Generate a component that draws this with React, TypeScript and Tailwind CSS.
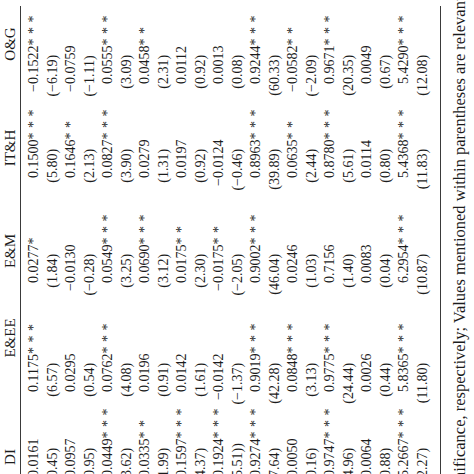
import clsx from 'clsx';

const columns = [
  {
    name: 'DI',
    w: 'w-[85px]',
    vals: ['0.0161', '(0.45)', '0.0957', '(0.95)', '0.0449***', '(3.62)', '0.0335**', '(1.99)', '0.1597***', '(4.37)', '0.1924***', '(5.51))', '0.9274***', '(47.64)', '0.0050', '(0.16)', '0.9747***', '(44.96)', '0.0064', '(0.88)', '5.2667***', '(2.27)'],
  },
  {
    name: 'E&EE',
    w: 'w-[109px]',
    vals: ['0.1175***', '(6.57)', '0.0295', '(0.54)', '0.0762***', '(4.08)', '0.0196', '(0.91)', '0.0142', '(1.61)', '−0.0142', '(−1.37)', '0.9019***', '(42.28)', '0.0848***', '(3.13)', '0.9775***', '(24.44)', '0.0026', '(0.44)', '5.8365***', '(11.80)'],
  },
  {
    name: 'E&M',
    w: 'w-[105px]',
    vals: ['0.0277*', '(1.84)', '−0.0130', '(−0.28)', '0.0549***', '(3.25)', '0.0690***', '(3.12)', '0.0175**', '(2.30)', '−0.0175**', '(−2.05)', '0.9002***', '(46.04)', '0.0246', '(1.03)', '0.7156', '(1.40)', '0.0083', '(0.04)', '6.2954***', '(10.87)'],
  },
  {
    name: 'IT&H',
    w: 'w-[94px]',
    vals: ['0.1500***', '(5.80)', '0.1646**', '(2.13)', '0.0827***', '(3.90)', '0.0279', '(1.31)', '0.0197', '(0.92)', '−0.0124', '(−0.46)', '0.8963***', '(39.89)', '0.0635**', '(2.44)', '0.8780***', '(5.61)', '0.0114', '(0.80)', '5.4368***', '(11.83)'],
  },
  {
    name: 'O&G',
    w: 'w-[121px]',
    vals: ['−0.1522***', '(−6.19)', '−0.0759', '(−1.11)', '0.0555***', '(3.09)', '0.0458**', '(2.31)', '0.0112', '(0.92)', '0.0013', '(0.08)', '0.9244***', '(60.33)', '−0.0582**', '(−2.09)', '0.9671***', '(20.35)', '0.0049', '(0.67)', '5.4290***', '(12.08)'],
  },
];

// splits "0.0549***" so the decimal points line up down a column
const Cell = ({ v, w }: { v: string; w: string }) => {
  const m = v.match(/^(.*?)(\**)$/);
  const body = m ? m[1] : v;
  const stars = m ? m[2] : '';
  const dot = body.indexOf('.');
  return (
    <div className={clsx('flex shrink-0', w)}>
      <span className="w-[50px] shrink-0 text-right whitespace-nowrap">{body.slice(0, dot)}</span>
      <span className="whitespace-nowrap">
        {body.slice(dot)}
        <span className="tracking-[4.5px]">{stars}</span>
      </span>
    </div>
  );
};

const App = () => {
  const rows = columns[0].vals.map((_, i) => i);

  return (
    <div className="w-[474px] h-[474px] overflow-hidden bg-white">
      <div className="w-[474px] h-[474px] -rotate-90 text-[#1c1c1c] font-['Liberation_Serif',serif]">
        {/* header */}
        <div className="flex h-[20px] mt-[6px] text-[15px] leading-[20px]">
          <div className="w-0 shrink-0 ml-[23px] flex justify-center"><span className="whitespace-nowrap">DI</span></div>
          <div className="w-0 shrink-0 ml-[119px] flex justify-center"><span className="whitespace-nowrap">E&amp;EE</span></div>
          <div className="w-0 shrink-0 ml-[87px] flex justify-center"><span className="whitespace-nowrap">E&amp;M</span></div>
          <div className="w-0 shrink-0 ml-[103px] flex justify-center"><span className="whitespace-nowrap">IT&amp;H</span></div>
          <div className="w-0 shrink-0 ml-[104px] flex justify-center"><span className="whitespace-nowrap">O&amp;G</span></div>
        </div>
        <div className="h-px bg-[#3a3a3a]" />

        {/* body */}
        <div className="mt-[4px] flex flex-col text-[14px] leading-[18.5px]">
          {rows.map((i) => (
            <div key={i} className="flex ml-[-40px]">
              {columns.map((c) => (
                <Cell key={c.name} v={c.vals[i]} w={c.w} />
              ))}
            </div>
          ))}
        </div>

        <div className="mt-[8px] h-px bg-[#3a3a3a]" />
        <div className="flex mt-[9px] text-[16.5px] leading-[20px] whitespace-nowrap">
          <div className="w-0 shrink-0 flex justify-end">
            <span>Note: ***, **, and * denote 1%, 5%, and 10% levels of sig</span>
          </div>
          <span>nificance, respectively; Values mentioned within parentheses are relevant t-statistics.</span>
        </div>
      </div>
    </div>
  );
};

export default App;
